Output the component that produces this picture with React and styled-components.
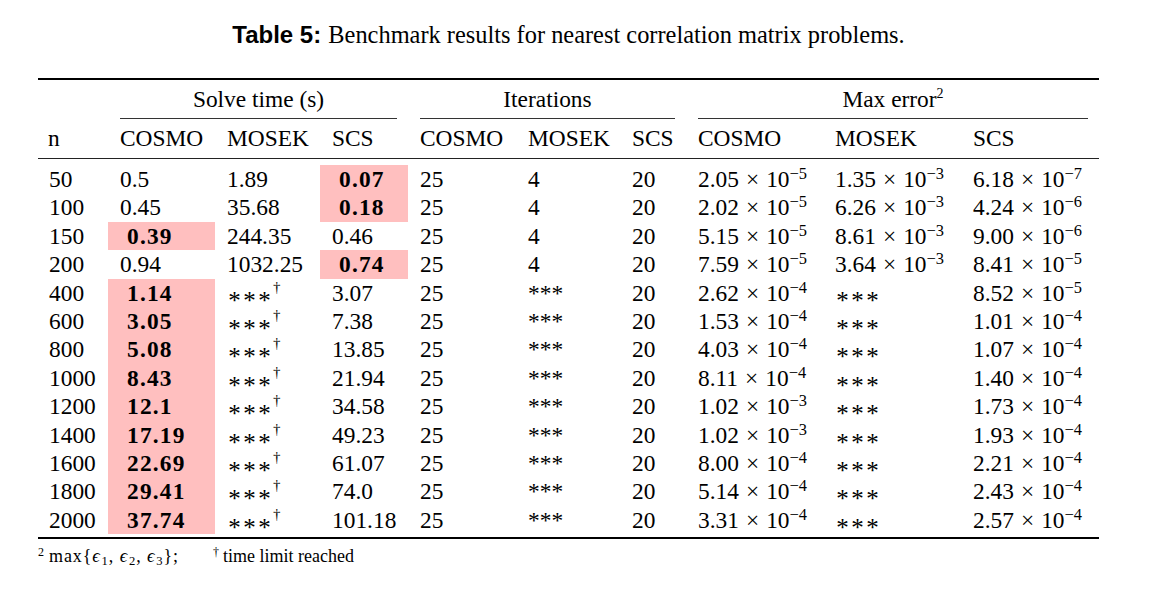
import React from "react";
import styled, { createGlobalStyle } from "styled-components";

const GlobalStyle = createGlobalStyle`
  html, body { margin: 0; padding: 0; background: #fff; }
  body {
    font-family: "Liberation Serif", "Times New Roman", serif;
    color: #000;
  }
`;

const COLS = "70px 107px 105px 88px 108px 104px 66px 137px 138px 138px";
const PINK = "#ffbfbf";

const Page = styled.div`
  width: 1163px;
  height: 593px;
  padding-top: 21px;
  box-sizing: border-box;
`;

const Caption = styled.div`
  width: 1061px;
  margin-left: 38px;
  text-align: center;
  font-size: 24.4px;
  line-height: 28px;
  white-space: nowrap;
`;

const CaptionLabel = styled.span`
  font-family: "Liberation Sans", Arial, sans-serif;
  font-weight: 700;
  font-size: 24px;
  margin-right: 1px;
`;

const Table = styled.div`
  margin: 29px 0 0 38px;
  width: 1061px;
  border-top: 2px solid #000;
  border-bottom: 2px solid #000;
  font-size: 23.4px;
`;

const GroupRow = styled.div`
  display: grid;
  grid-template-columns: ${COLS};
  height: 39px;
`;

const GroupHead = styled.div`
  grid-column: ${(p) => p.$cols};
  margin: 0 11px 0 12px;
  border-bottom: 1px solid #333;
  text-align: center;
  line-height: 38px;
  white-space: nowrap;
`;

const HeaderRow = styled.div`
  display: grid;
  grid-template-columns: ${COLS};
  height: 39px;
  border-bottom: 1px solid #222;
`;

const HeadCell = styled.div`
  padding-left: ${(p) => (p.$first ? 10 : 12)}px;
  line-height: 39px;
  white-space: nowrap;
`;

const Body = styled.div`
  padding: 6px 0 3px;
`;

const DataRow = styled.div`
  display: grid;
  grid-template-columns: ${COLS};
  height: 28.4px;
`;

const Cell = styled.div`
  padding-left: ${(p) => (p.$first ? 11 : p.$hl ? 19 : 12)}px;
  background: ${(p) => (p.$hl ? PINK : "transparent")};
  font-weight: ${(p) => (p.$hl ? 700 : 400)};
  letter-spacing: ${(p) => (p.$hl ? "1.2px" : "0")};
  line-height: 28.4px;
  height: 28.4px;
  white-space: nowrap;
`;

const Sup = styled.sup`
  font-size: ${(p) => p.$size || 16.4}px;
  vertical-align: ${(p) => p.$raise || 8}px;
  line-height: 0;
  margin-left: ${(p) => p.$ml || 0}px;
`;

const Times = styled.span`
  display: inline-block;
  margin: 0 7px;
  font-size: 23.4px;
`;

const Star = styled.span`
  display: inline-block;
  width: 15px;
  text-align: center;
  font-size: 25px;
  line-height: 0;
  vertical-align: -8px;
`;

const Foot = styled.div`
  margin: 7px 0 0 38px;
  font-size: 18px;
  line-height: 20px;
  white-space: nowrap;
`;

const FootMark = styled.sup`
  font-size: ${(p) => p.$size || 12}px;
  vertical-align: ${(p) => p.$raise || 6}px;
  line-height: 0;
  margin-right: ${(p) => p.$mr || 5}px;
`;

const MathVar = styled.i`
  font-style: italic;
  font-size: 18.5px;
`;

const Sub = styled.sub`
  font-size: 12.6px;
  vertical-align: -3px;
  line-height: 0;
  margin-left: 1px;
`;

const MathText = styled.span`
  letter-spacing: 0.9px;
`;

const Gap = styled.span`
  display: inline-block;
  width: ${(p) => p.$w}px;
`;

const Stars = ({ dagger }) => (
  <>
    <Star>*</Star>
    <Star>*</Star>
    <Star>*</Star>
    {dagger && (
      <Sup $size={15} $raise={9} $ml={1}>
        †
      </Sup>
    )}
  </>
);

const Sci = ({ v }) => {
  if (!v) return <Stars />;
  const [m, e] = v;
  return (
    <>
      {m}
      <Times>×</Times>
      10
      <Sup>−{e}</Sup>
    </>
  );
};

const rows = [
  { n: "50", c: "0.5", m: "1.89", s: "0.07", hs: true, it: "4", e: [["2.05", 5], ["1.35", 3], ["6.18", 7]] },
  { n: "100", c: "0.45", m: "35.68", s: "0.18", hs: true, it: "4", e: [["2.02", 5], ["6.26", 3], ["4.24", 6]] },
  { n: "150", c: "0.39", hc: true, m: "244.35", s: "0.46", it: "4", e: [["5.15", 5], ["8.61", 3], ["9.00", 6]] },
  { n: "200", c: "0.94", m: "1032.25", s: "0.74", hs: true, it: "4", e: [["7.59", 5], ["3.64", 3], ["8.41", 5]] },
  { n: "400", c: "1.14", hc: true, m: null, s: "3.07", it: "***", e: [["2.62", 4], null, ["8.52", 5]] },
  { n: "600", c: "3.05", hc: true, m: null, s: "7.38", it: "***", e: [["1.53", 4], null, ["1.01", 4]] },
  { n: "800", c: "5.08", hc: true, m: null, s: "13.85", it: "***", e: [["4.03", 4], null, ["1.07", 4]] },
  { n: "1000", c: "8.43", hc: true, m: null, s: "21.94", it: "***", e: [["8.11", 4], null, ["1.40", 4]] },
  { n: "1200", c: "12.1", hc: true, m: null, s: "34.58", it: "***", e: [["1.02", 3], null, ["1.73", 4]] },
  { n: "1400", c: "17.19", hc: true, m: null, s: "49.23", it: "***", e: [["1.02", 3], null, ["1.93", 4]] },
  { n: "1600", c: "22.69", hc: true, m: null, s: "61.07", it: "***", e: [["8.00", 4], null, ["2.21", 4]] },
  { n: "1800", c: "29.41", hc: true, m: null, s: "74.0", it: "***", e: [["5.14", 4], null, ["2.43", 4]] },
  { n: "2000", c: "37.74", hc: true, m: null, s: "101.18", it: "***", e: [["3.31", 4], null, ["2.57", 4]] },
];

const heads = ["COSMO", "MOSEK", "SCS", "COSMO", "MOSEK", "SCS", "COSMO", "MOSEK", "SCS"];

export default function App() {
  return (
    <>
      <GlobalStyle />
      <Page>
        <Caption>
          <CaptionLabel>Table 5:</CaptionLabel> Benchmark results for nearest correlation matrix problems.
        </Caption>
        <Table>
          <GroupRow>
            <GroupHead $cols="2 / 5">Solve time (s)</GroupHead>
            <GroupHead $cols="5 / 8">Iterations</GroupHead>
            <GroupHead $cols="8 / 11">
              Max error
              <Sup $size={14} $raise={9}>2</Sup>
            </GroupHead>
          </GroupRow>
          <HeaderRow>
            <HeadCell $first>n</HeadCell>
            {heads.map((h, i) => (
              <HeadCell key={i}>{h}</HeadCell>
            ))}
          </HeaderRow>
          <Body>
            {rows.map((r) => (
              <DataRow key={r.n}>
                <Cell $first>{r.n}</Cell>
                <Cell $hl={r.hc}>{r.c}</Cell>
                <Cell>{r.m ? r.m : <Stars dagger />}</Cell>
                <Cell $hl={r.hs}>{r.s}</Cell>
                <Cell>25</Cell>
                <Cell>{r.it}</Cell>
                <Cell>20</Cell>
                {r.e.map((v, i) => (
                  <Cell key={i}>
                    <Sci v={v} />
                  </Cell>
                ))}
              </DataRow>
            ))}
          </Body>
        </Table>
        <Foot>
          <FootMark>2</FootMark>
          <MathText>
            max{"{"}
            <MathVar>ϵ</MathVar>
            <Sub>1</Sub>, <MathVar>ϵ</MathVar>
            <Sub>2</Sub>, <MathVar>ϵ</MathVar>
            <Sub>3</Sub>
            {"}"};
          </MathText>
          <Gap $w={34} />
          <FootMark $mr={4}>†</FootMark>time limit reached
        </Foot>
      </Page>
    </>
  );
}
